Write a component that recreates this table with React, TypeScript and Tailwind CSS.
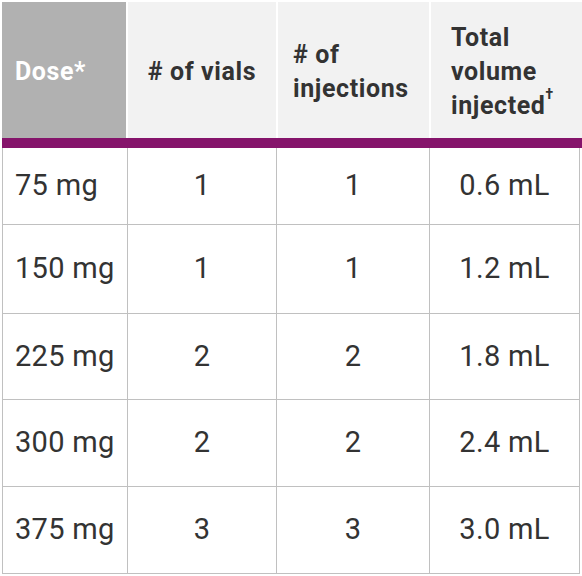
import React from "react";

const rows = [
  { dose: "75 mg", vials: "1", inj: "1", vol: "0.6 mL", h: "h-[77px]" },
  { dose: "150 mg", vials: "1", inj: "1", vol: "1.2 mL", h: "h-[89px]" },
  { dose: "225 mg", vials: "2", inj: "2", vol: "1.8 mL", h: "h-[86px]" },
  { dose: "300 mg", vials: "2", inj: "2", vol: "2.4 mL", h: "h-[87px]" },
  { dose: "375 mg", vials: "3", inj: "3", vol: "3.0 mL", h: "h-[87px]" },
];

export default function App() {
  return (
    <div
      className="w-[582px] h-[576px] bg-white overflow-hidden pt-[2px] pl-[2px] text-[#333333]"
      style={{ fontFamily: "Roboto, 'Liberation Sans', sans-serif" }}
    >
      <div className="flex h-[136px] gap-[2px] text-[25px] font-bold leading-[34px] tracking-[0.6px]">
        <div className="w-[124px] bg-[#b1b1b1] text-white flex items-center pl-[13px] pt-[4px]">Dose*</div>
        <div className="w-[148px] bg-[#f2f2f2] flex items-center justify-center pt-[4px]"># of vials</div>
        <div className="w-[151px] bg-[#f2f2f2] flex items-center pl-[15px] pt-[4px]">
          <div># of<br />injections</div>
        </div>
        <div className="w-[151px] bg-[#f2f2f2] flex items-center pl-[20px] pt-[4px]">
          <div>
            Total<br />volume<br />injected<sup className="text-[14px] align-[8px] font-bold">†</sup>
          </div>
        </div>
      </div>
      <div className="h-[10px] w-[580px] bg-[#85146b]" />
      <div className="w-[578px] border-l border-[#c0c0c0] text-[29px] tracking-[0.3px]">
        {rows.map((r) => (
          <div key={r.dose} className={`grid grid-cols-[125px_149px_153px_150px] border-b border-[#c0c0c0] ${r.h}`}>
            <div className="border-r border-[#c0c0c0] flex items-center pl-[12px]">{r.dose}</div>
            <div className="border-r border-[#c0c0c0] flex items-center justify-center">{r.vials}</div>
            <div className="border-r border-[#c0c0c0] flex items-center justify-center">{r.inj}</div>
            <div className="border-r border-[#c0c0c0] flex items-center justify-center">{r.vol}</div>
          </div>
        ))}
      </div>
    </div>
  );
}
